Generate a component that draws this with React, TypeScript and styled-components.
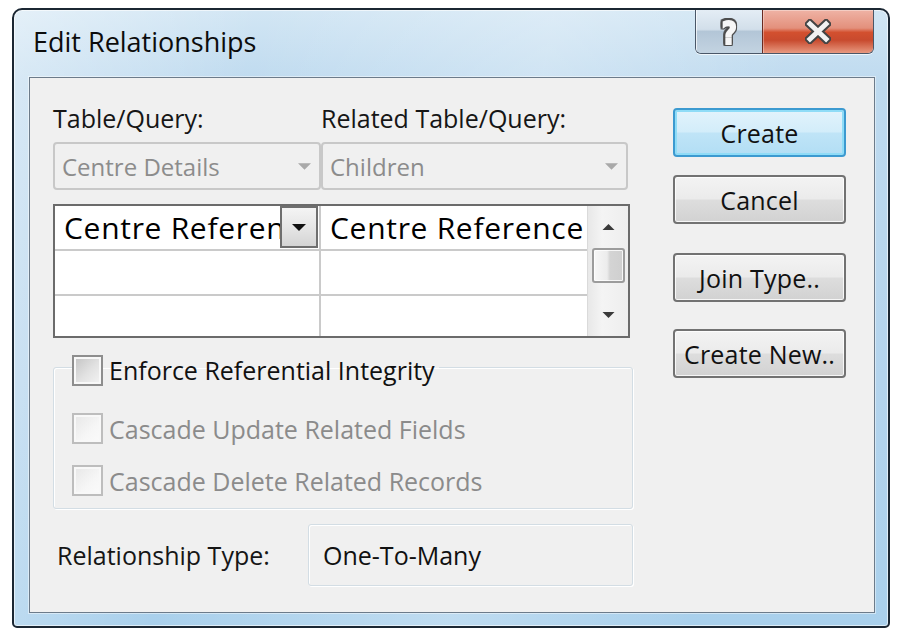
import styled, { createGlobalStyle, css } from "styled-components";

const GlobalStyle = createGlobalStyle`
  html, body {
    margin: 0;
    padding: 0;
    background: #fff;
  }
  body {
    font-family: "Open Sans", "Noto Sans", Arial, sans-serif;
    color: #111;
  }
  * {
    box-sizing: border-box;
  }
`;

function DownTriangle({ color = "#111", w = 14, h = 7 }: { color?: string; w?: number; h?: number }) {
    return (
        <svg width={w} height={h} viewBox="0 0 14 7">
            <polygon points="0,0 14,0 7,7" fill={color} />
        </svg>
    );
}

function UpTriangle({ color = "#333", w = 14, h = 7 }: { color?: string; w?: number; h?: number }) {
    return (
        <svg width={w} height={h} viewBox="0 0 14 7">
            <polygon points="0,7 14,7 7,0" fill={color} />
        </svg>
    );
}

function CloseGlyph() {
    return (
        <svg width="26" height="25" viewBox="0 0 26 25">
            <path d="M5 5 L21 20 M21 5 L5 20" stroke="#444" strokeWidth="9" strokeLinecap="square" />
            <path d="M5 5 L21 20 M21 5 L5 20" stroke="#f2f2f2" strokeWidth="5" strokeLinecap="square" />
        </svg>
    );
}

export default function App() {
    return (
        <Page>
            <GlobalStyle />
            <Window>
                <TitleBar>
                    <Title>Edit Relationships</Title>
                    <CaptionGroup>
                        <HelpButton>
                            <HelpMark>?</HelpMark>
                        </HelpButton>
                        <CloseButton>
                            <CloseGlyph />
                        </CloseButton>
                    </CaptionGroup>
                </TitleBar>

                <Client>
                    <LeftColumn>
                        <ComboGrid>
                            <FieldLabel>Table/Query:</FieldLabel>
                            <FieldLabel>Related Table/Query:</FieldLabel>
                            <Combo $width={268}>
                                <span>Centre Details</span>
                                <DownTriangle color="#a9a9a9" w={13} h={7} />
                            </Combo>
                            <Combo $width={307}>
                                <span>Children</span>
                                <DownTriangle color="#a9a9a9" w={13} h={7} />
                            </Combo>
                        </ComboGrid>

                        <DataGrid>
                            <Cells>
                                <Cell>
                                    <CellText>Centre Reference</CellText>
                                    <DropButton>
                                        <DownTriangle color="#111" w={14} h={7} />
                                    </DropButton>
                                </Cell>
                                <Cell>
                                    <CellText>Centre Reference</CellText>
                                </Cell>
                                <Cell />
                                <Cell />
                                <Cell />
                                <Cell />
                            </Cells>
                            <ScrollBar>
                                <ScrollArrow>
                                    <UpTriangle color="#3a3a3a" w={13} h={6} />
                                </ScrollArrow>
                                <Thumb />
                                <ScrollTrack />
                                <ScrollArrow>
                                    <DownTriangle color="#3a3a3a" w={13} h={6} />
                                </ScrollArrow>
                            </ScrollBar>
                        </DataGrid>

                        <GroupBox>
                            <Legend>
                                <CheckBox />
                                <span>Enforce Referential Integrity</span>
                            </Legend>
                            <CheckRow $disabled $gap={27}>
                                <CheckBox $disabled />
                                <span>Cascade Update Related Fields</span>
                            </CheckRow>
                            <CheckRow $disabled $gap={21}>
                                <CheckBox $disabled />
                                <span>Cascade Delete Related Records</span>
                            </CheckRow>
                        </GroupBox>

                        <RelationRow>
                            <RelationLabel>Relationship Type:</RelationLabel>
                            <RelationBox>One-To-Many</RelationBox>
                        </RelationRow>
                    </LeftColumn>

                    <ButtonColumn>
                        <DialogButton $primary $gap={0}>Create</DialogButton>
                        <DialogButton $gap={18}>Cancel</DialogButton>
                        <DialogButton $gap={29}>Join Type..</DialogButton>
                        <DialogButton $gap={27}>Create New..</DialogButton>
                    </ButtonColumn>
                </Client>
            </Window>
        </Page>
    );
}

const Page = styled.div`
    width: 904px;
    height: 638px;
    padding: 8px 0 0 12px;
    background: #fff;
`;

const Window = styled.div`
    width: 878px;
    height: 620px;
    display: flex;
    flex-direction: column;
    border: 2px solid #1b2733;
    border-radius: 10px 10px 5px 5px;
    background:
        linear-gradient(100deg, rgba(255,255,255,0.4) 0%, rgba(255,255,255,0) 25%, rgba(255,255,255,0.25) 55%, rgba(255,255,255,0) 80%),
        linear-gradient(180deg, #d2e6f4 0%, #bedaef 12%, #b4d4ed 60%, #a9d0ec 100%);
    box-shadow: inset 0 0 0 1px rgba(255, 255, 255, 0.6);
    overflow: hidden;
`;

const TitleBar = styled.div`
    height: 67px;
    flex: none;
    display: flex;
    align-items: flex-start;
    padding: 0 14px 0 19px;
`;

const Title = styled.div`
    margin-top: 13px;
    font-size: 27px;
    line-height: 37px;
    color: #0c0c0c;
`;

const CaptionGroup = styled.div`
    margin-left: auto;
    height: 44px;
    display: flex;
    border: 1px solid #4a5768;
    border-top: none;
    border-radius: 0 0 6px 6px;
    overflow: hidden;
    box-shadow: 0 1px 0 rgba(255, 255, 255, 0.7);
`;

const HelpButton = styled.div`
    width: 66px;
    display: flex;
    align-items: center;
    justify-content: center;
    background: linear-gradient(180deg, #e4edf5 0%, #d2dfea 45%, #b3c6d7 50%, #c3d3e1 100%);
    box-shadow: inset 1px 0 0 rgba(255, 255, 255, 0.7);
`;

const HelpMark = styled.span`
    font-family: "DejaVu Sans", sans-serif;
    font-weight: 700;
    font-size: 32px;
    line-height: 32px;
    color: #f6f6f6;
    -webkit-text-stroke: 2px #f6f6f6;
    filter: drop-shadow(1.5px 0 0 #4d4d4d) drop-shadow(-1.5px 0 0 #4d4d4d) drop-shadow(0 1.5px 0 #4d4d4d) drop-shadow(0 -1.5px 0 #4d4d4d);
    transform: scaleX(0.82);
    margin-top: 2px;
`;

const CloseButton = styled.div`
    width: 111px;
    display: flex;
    align-items: center;
    justify-content: center;
    border-left: 1px solid #6a2a20;
    background: linear-gradient(180deg, #efb3a5 0%, #e3907c 42%, #d3502f 52%, #c84a2e 70%, #e89980 100%);
    box-shadow: inset 1px 1px 0 rgba(255, 255, 255, 0.35);
`;

const Client = styled.div`
    flex: 1;
    margin: 0 13px 13px 15px;
    border: 1px solid #6c7b8a;
    background: #f0f0f0;
    display: flex;
    gap: 40px;
    padding: 28px 0 0 23px;
    box-shadow: 0 0 0 1px rgba(255, 255, 255, 0.45);
`;

const LeftColumn = styled.div`
    width: 580px;
    display: flex;
    flex-direction: column;
`;

const ComboGrid = styled.div`
    display: grid;
    grid-template-columns: 268px 308px;
    row-gap: 12px;
`;

const FieldLabel = styled.div`
    font-size: 25px;
    line-height: 24px;
    color: #161616;
`;

const Combo = styled.div<{ $width: number }>`
    width: ${(p) => p.$width}px;
    height: 48px;
    display: flex;
    align-items: center;
    justify-content: space-between;
    padding: 0 8px 0 7px;
    border: 2px solid #c8c8c8;
    border-radius: 4px;
    background: #f0f0f0;
    color: #8c8c8c;
    font-size: 24px;
`;

const DataGrid = styled.div`
    margin-top: 14px;
    width: 577px;
    height: 134px;
    display: flex;
    border: 2px solid #6b6b6b;
    background: #fff;
`;

const Cells = styled.div`
    flex: 1;
    display: grid;
    grid-template-columns: 264px 1fr;
    grid-template-rows: 43px 43px 1fr;
    gap: 2px;
    background: #cacaca;
`;

const Cell = styled.div`
    background: #fff;
    display: flex;
    align-items: flex-start;
    overflow: hidden;
    min-width: 0;
`;

const CellText = styled.div`
    flex: 1;
    min-width: 0;
    padding-left: 9px;
    white-space: nowrap;
    overflow: hidden;
    font-size: 30px;
    letter-spacing: 0.7px;
    line-height: 43px;
    color: #000;
`;

const DropButton = styled.div`
    flex: none;
    width: 38px;
    height: 42px;
    margin-right: 1px;
    display: flex;
    align-items: center;
    justify-content: center;
    border: 2px solid #6e6e6e;
    background: linear-gradient(180deg, #f4f4f4 0%, #e6e6e6 50%, #d4d4d4 100%);
`;

const ScrollBar = styled.div`
    width: 41px;
    flex: none;
    display: flex;
    flex-direction: column;
    align-items: center;
    border-left: 1px solid #dadada;
    background: linear-gradient(90deg, #e8e8e8 0%, #f4f4f4 35%, #eeeeee 100%);
`;

const ScrollArrow = styled.div`
    height: 42px;
    width: 100%;
    display: flex;
    align-items: center;
    justify-content: center;
`;

const Thumb = styled.div`
    width: 33px;
    height: 35px;
    flex: none;
    border: 2px solid #9c9c9c;
    border-radius: 3px;
    background: linear-gradient(90deg, #f7f7f7 0%, #ececec 45%, #d4d4d4 55%, #cfcfcf 100%);
    box-shadow: inset 0 0 0 1px rgba(255, 255, 255, 0.8);
`;

const ScrollTrack = styled.div`
    flex: 1;
`;

const GroupBox = styled.fieldset`
    margin: 11px 0 0 0;
    width: 580px;
    min-width: 0;
    padding: 0 0 12px 18px;
    border: 1px solid #d3dde4;
    border-radius: 3px;
    box-shadow: inset 1px 1px 0 #fff, 1px 1px 0 #fff;
`;

const Legend = styled.legend`
    display: flex;
    align-items: flex-start;
    gap: 6px;
    padding: 6px 4px 0 0;
    height: 37px;
    font-size: 25px;
    line-height: 31px;
    color: #111;
`;

const CheckRow = styled.div<{ $disabled?: boolean; $gap: number }>`
    margin-top: ${(p) => p.$gap}px;
    height: 31px;
    display: flex;
    align-items: center;
    gap: 6px;
    font-size: 25px;
    color: ${(p) => (p.$disabled ? "#8b8b8b" : "#111")};
`;

const CheckBox = styled.div<{ $disabled?: boolean }>`
    width: 31px;
    height: 31px;
    flex: none;
    border: 2px solid ${(p) => (p.$disabled ? "#bdbdbd" : "#8e8e8e")};
    box-shadow: inset 0 0 0 2px #f8f8f8;
    ${(p) =>
        p.$disabled
            ? css`
                  background: linear-gradient(135deg, #e6e6e6 0%, #f6f6f6 60%, #fbfbfb 100%);
              `
            : css`
                  background: linear-gradient(135deg, #c2c2c2 0%, #e2e2e2 55%, #f4f4f4 100%);
              `}
`;

const RelationRow = styled.div`
    margin-top: 15px;
    height: 62px;
    display: flex;
    align-items: center;
`;

const RelationLabel = styled.div`
    padding-left: 4px;
    font-size: 25px;
    color: #161616;
`;

const RelationBox = styled.div`
    margin-left: auto;
    width: 325px;
    height: 62px;
    display: flex;
    align-items: center;
    padding-left: 14px;
    border: 1px solid #d3dde4;
    border-radius: 3px;
    box-shadow: inset 1px 1px 0 #fff, 1px 1px 0 #fff;
    font-size: 25px;
    color: #111;
`;

const ButtonColumn = styled.div`
    width: 173px;
    display: flex;
    flex-direction: column;
    padding-top: 2px;
`;

const DialogButton = styled.div<{ $primary?: boolean; $gap: number }>`
    margin-top: ${(p) => p.$gap}px;
    height: 49px;
    display: flex;
    align-items: center;
    justify-content: center;
    border-radius: 4px;
    font-size: 25px;
    letter-spacing: 0.2px;
    color: #111;
    white-space: nowrap;
    ${(p) =>
        p.$primary
            ? css`
                  border: 2px solid #3c9ad0;
                  box-shadow: inset 0 0 0 2px #8fdcf7;
                  background: linear-gradient(180deg, #e2f3fc 0%, #d3edfa 48%, #bfe4f7 52%, #b2def4 100%);
              `
            : css`
                  border: 2px solid #727272;
                  box-shadow: inset 0 0 0 1px rgba(255, 255, 255, 0.8);
                  background: linear-gradient(180deg, #f3f3f3 0%, #ebebeb 48%, #dddddd 52%, #d2d2d2 100%);
              `}
`;
